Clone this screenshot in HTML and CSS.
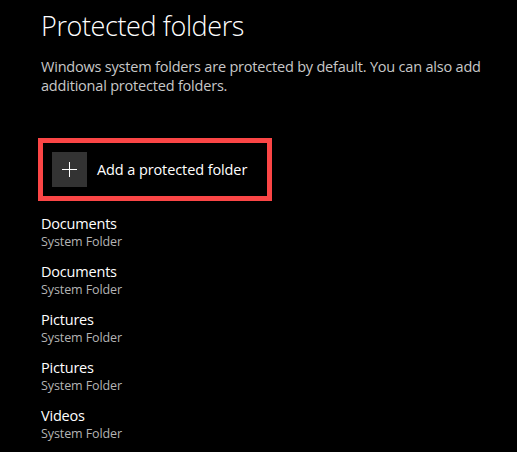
FILE: index.html
```html
<!DOCTYPE html>
<html>
<head>
<meta charset="utf-8">
<link rel="stylesheet" href="styles.css">
</head>
<body>
<div class="page">
  <h1 class="title">Protected folders</h1>
  <p class="desc">Windows system folders are protected by default. You can also add additional protected folders.</p>
  <div class="highlight">
    <div class="add-btn">
      <span class="plus">
        <svg width="15" height="15" viewBox="0 0 15 15"><path d="M7.5 0V15M0 7.5H15" stroke="#fff" stroke-width="1" fill="none"/></svg>
      </span>
      <span class="add-label">Add a protected folder</span>
    </div>
  </div>
  <ul class="list">
    <li class="item"><div class="name">Documents</div><div class="sub">System Folder</div></li>
    <li class="item"><div class="name">Documents</div><div class="sub">System Folder</div></li>
    <li class="item"><div class="name">Pictures</div><div class="sub">System Folder</div></li>
    <li class="item"><div class="name">Pictures</div><div class="sub">System Folder</div></li>
    <li class="item"><div class="name">Videos</div><div class="sub">System Folder</div></li>
  </ul>
</div>
</body>
</html>
```
FILE: styles.css
```css
html, body {
  margin: 0;
  padding: 0;
  background: #000;
  height: 100%;
  overflow: hidden;
}
.page {
  padding: 8px 0 0 41px;
  font-family: "Open Sans", "Noto Sans", sans-serif;
  color: #fff;
}
.title {
  margin: 0;
  font-size: 27px;
  font-weight: 300;
  line-height: 36px;
  letter-spacing: -0.4px;
}
.desc {
  margin: 13px 0 0 0;
  width: 450px;
  font-size: 14.5px;
  line-height: 19px;
  color: #c8c8c8;
  letter-spacing: -0.2px;
}
.highlight {
  margin: 43px 0 0 -3px;
  width: 224px;
  height: 53px;
  border: 5px solid #fb4646;
  display: flex;
  align-items: center;
}
.add-btn {
  display: flex;
  align-items: center;
  margin-left: 9px;
}
.plus {
  width: 35px;
  height: 35px;
  background: #333;
  display: flex;
  align-items: center;
  justify-content: center;
}
.plus svg { display: block; }
.add-label {
  margin-left: 10px;
  font-size: 14.5px;
  letter-spacing: -0.1px;
  color: #fff;
}
.list {
  list-style: none;
  margin: 13px 0 0 0;
  padding: 0;
}
.item {
  height: 48px;
}
.name {
  font-size: 14.5px;
  line-height: 20px;
  letter-spacing: -0.2px;
  color: #fff;
}
.sub {
  font-size: 12.5px;
  line-height: 18px;
  margin-top: -1px;
  color: #b4b4b4;
  letter-spacing: -0.1px;
}
```
